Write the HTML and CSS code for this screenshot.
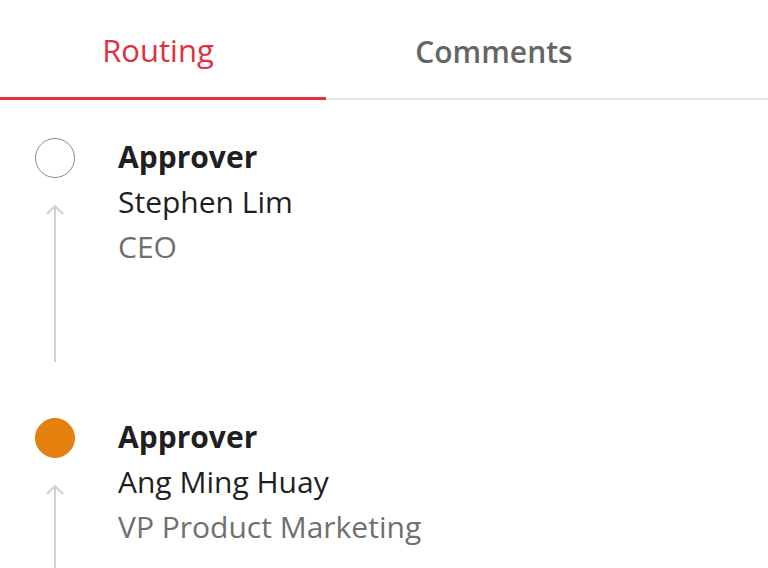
FILE: index.html
```html
<!DOCTYPE html>
<html>
<head>
<meta charset="utf-8">
<link rel="stylesheet" href="styles.css">
</head>
<body>
<div class="tabs">
  <div class="tab active">Routing</div>
  <div class="tab">Comments</div>
</div>
<div class="list">
  <div class="item">
    <div class="rail">
      <div class="dot"></div>
      <svg class="arrow" width="40" height="158" viewBox="0 0 40 158"><path d="M20 2 V158 M12 10 L20 2 L28 10" fill="none" stroke="#d2d2d2" stroke-width="2"/></svg>
    </div>
    <div class="info">
      <div class="role">Approver</div>
      <div class="name">Stephen Lim</div>
      <div class="title">CEO</div>
    </div>
  </div>
  <div class="item">
    <div class="rail">
      <div class="dot current"></div>
      <svg class="arrow" width="40" height="158" viewBox="0 0 40 158"><path d="M20 2 V158 M12 10 L20 2 L28 10" fill="none" stroke="#d2d2d2" stroke-width="2"/></svg>
    </div>
    <div class="info">
      <div class="role">Approver</div>
      <div class="name">Ang Ming Huay</div>
      <div class="title">VP Product Marketing</div>
    </div>
  </div>
</div>
</body>
</html>
```
FILE: styles.css
```css
html, body {
  margin: 0;
  padding: 0;
  background: #fff;
  font-family: "Open Sans", "Noto Sans", sans-serif;
  overflow: hidden;
}
.tabs {
  display: flex;
  height: 100px;
  box-shadow: inset 0 -2px 0 #e2e2e2;
}
.tab {
  width: 326px;
  box-sizing: border-box;
  display: flex;
  justify-content: center;
  align-items: center;
  padding-top: 3px;
  padding-left: 10px;
  font-size: 30px;
  color: #666;
  font-weight: 600;
}
.tab.active {
  color: #e1313f;
  border-bottom: 3px solid #e1313f;
  padding-left: 0;
  padding-right: 10px;
  font-size: 31px;
  font-weight: 400;
}
.list {
  padding-top: 38px;
}
.item {
  display: flex;
  height: 280px;
}
.rail {
  width: 83px;
  padding-left: 35px;
  display: flex;
  flex-direction: column;
  align-items: flex-start;
}
.dot {
  width: 40px;
  height: 40px;
  box-sizing: border-box;
  border-radius: 50%;
  border: 1px solid #8a8a8a;
}
.dot.current {
  background: #e3800e;
  border-color: #e3800e;
}
.arrow {
  display: block;
  margin-top: 26px;
}
.info {
  margin-top: -4px;
  font-size: 30px;
  line-height: 45px;
  color: #1f1f1f;
}
.role {
  font-weight: 700;
}
.title {
  color: #707070;
}
```
